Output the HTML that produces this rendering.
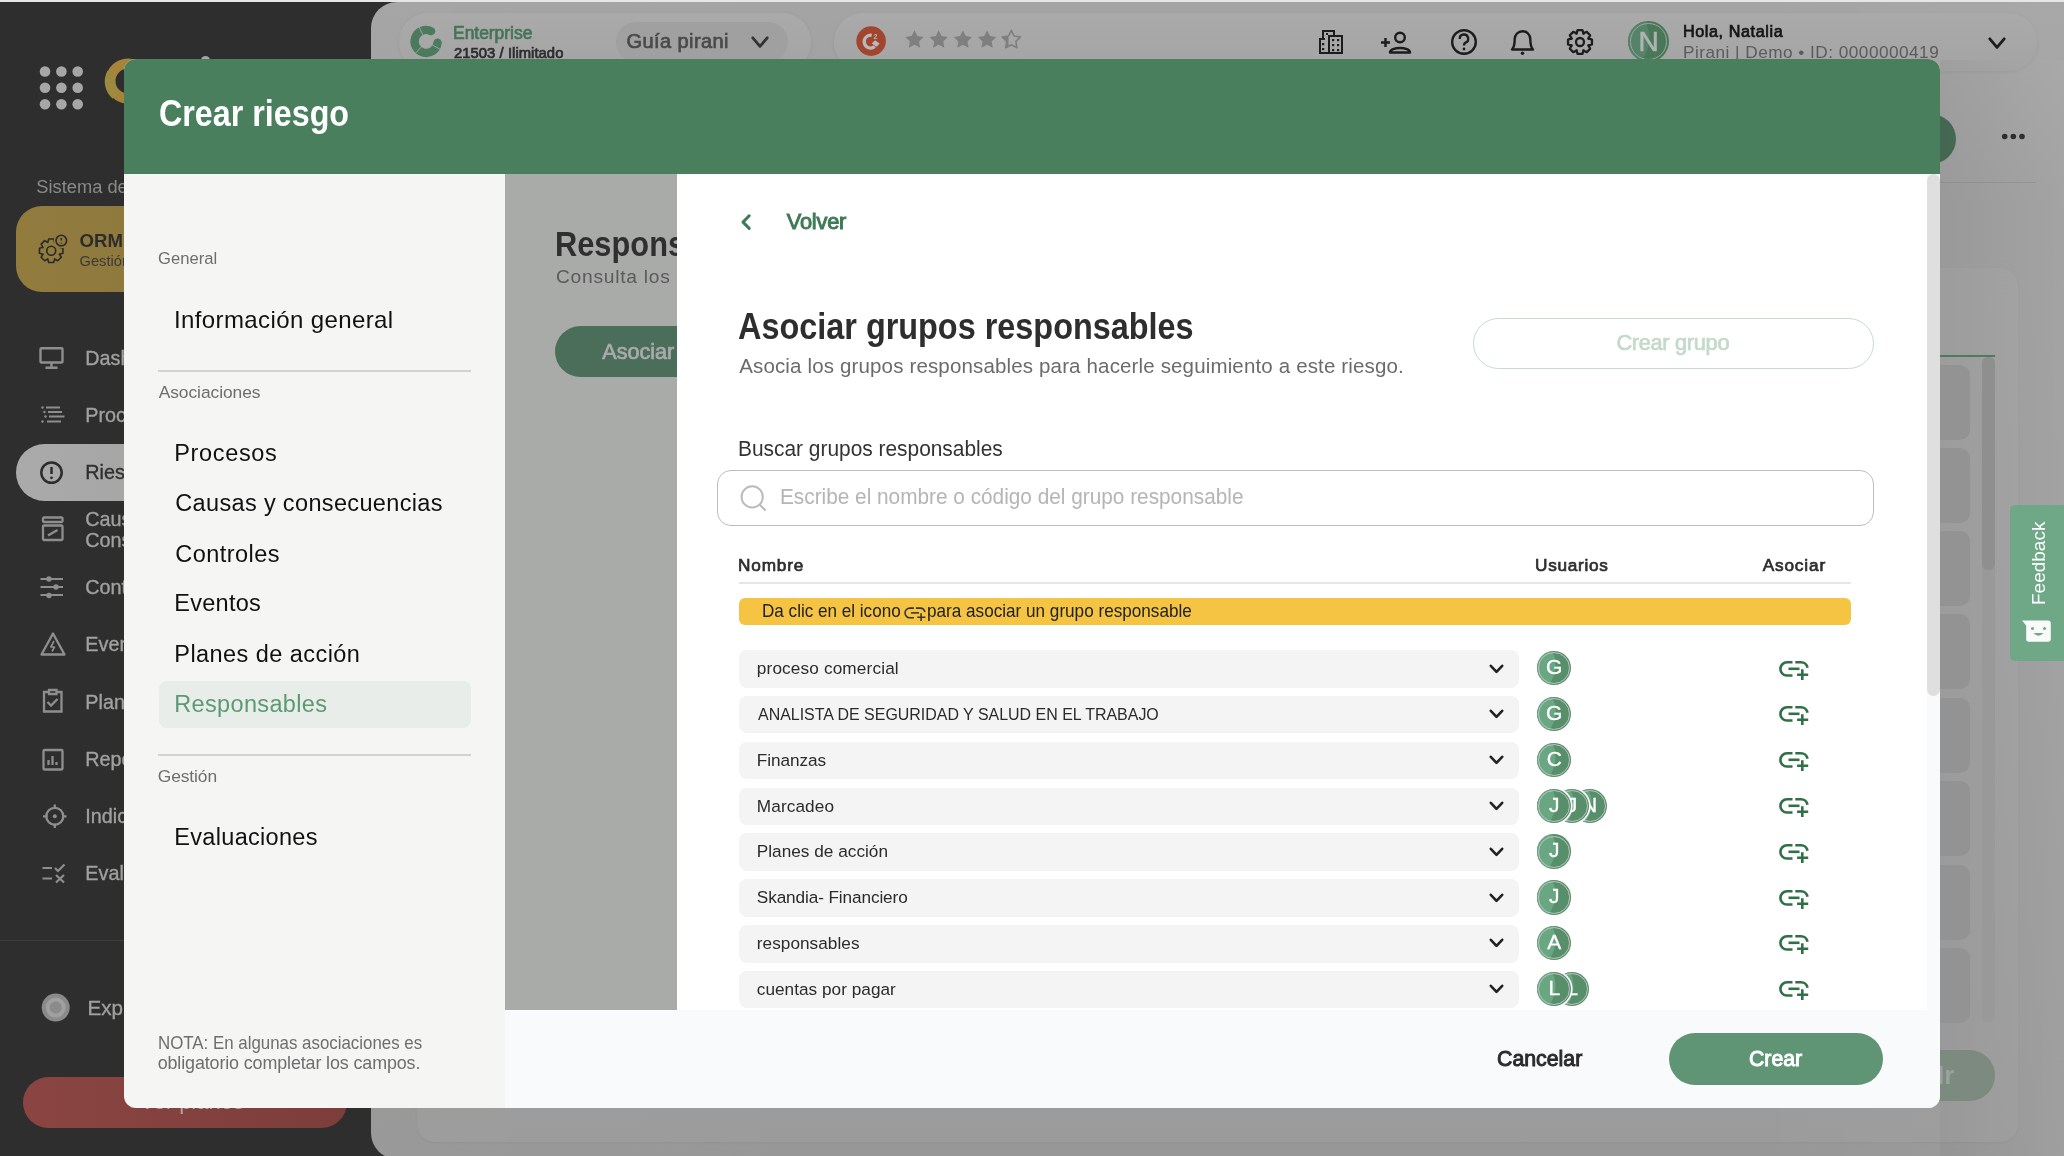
<!DOCTYPE html>
<html><head><meta charset="utf-8"><style>
*{margin:0;padding:0;box-sizing:border-box}
html,body{width:2064px;height:1156px;overflow:hidden}
body{position:relative;background:#2e2e2e;font-family:"Liberation Sans",sans-serif;-webkit-font-smoothing:antialiased;will-change:transform}
.a{position:absolute}
.t{position:absolute;white-space:nowrap;line-height:1;font-family:"Liberation Sans",sans-serif}
svg{position:absolute;overflow:visible}
</style></head>
<body>
<div class="a" style="left:0;top:0;width:2064px;height:2px;background:#e6e6e6"></div>
<div class="a" style="left:371px;top:2px;width:1720px;height:1157px;border-radius:26px;background:linear-gradient(90deg,rgba(255,255,255,.02) 0%,rgba(255,255,255,0) 30%,rgba(255,255,255,0) 80%,rgba(255,255,255,.05) 100%),linear-gradient(180deg,#a3a4a3 0px,#a1a2a1 60px,#9b9c9b 200px,#9a9b9a 600px,#979797 1156px)"></div>
<div class="a" style="left:399px;top:13px;width:412px;height:58px;border-radius:29px;background:linear-gradient(180deg,#aaaaaa,#a4a4a4);box-shadow:0 1px 4px rgba(0,0,0,.06)"></div>
<div class="a" style="left:616px;top:22px;width:172px;height:40px;border-radius:20px;background:#a0a0a0"></div>
<div class="a" style="left:834px;top:13px;width:1203px;height:58px;border-radius:29px;background:linear-gradient(180deg,#aaaaaa,#a4a4a4);box-shadow:0 1px 4px rgba(0,0,0,.06)"></div>
<svg style="left:405px;top:20px" width="42" height="42" viewBox="0 0 42 42"><path d="M32.54 22.70 A11.5 11.5 0 1 1 26.14 11.16" fill="none" stroke="#4b7a5c" stroke-width="8.3" stroke-linecap="round"/><path d="M18.25 15.66 L13.87 6.67 M16.75 26.33 L10.06 33.76 M26.79 24.65 L35.53 29.50" stroke="#a2a9a4" stroke-width="0.9"/></svg>
<svg style="left:752px;top:37px" width="16" height="10" viewBox="0 0 16 10"><path d="M0.8 0.8 L8.0 9.4 L15.2 0.8" fill="none" stroke="#333" stroke-width="2.8" stroke-linecap="round" stroke-linejoin="round"/></svg>
<svg style="left:856px;top:26px" width="30" height="30" viewBox="0 0 30 30"><circle cx="15.1" cy="15.1" r="14.8" fill="#a2452f"/><path d="M15.71 9.30 A6.4 6.4 0 1 0 18.71 20.50" fill="none" stroke="#b9b9b9" stroke-width="3.2"/><polygon points="15.8,17.3 19.1,14.2 23.6,17.4 20.4,21" fill="#b9b9b9"/><text x="17.6" y="12.6" font-size="7" font-family="Liberation Sans" font-weight="700" fill="#b9b9b9">2</text></svg>
<svg style="left:900px;top:28px" width="130" height="24" viewBox="0 0 130 24"><polygon points="14.50,2.30 17.32,8.02 23.63,8.93 19.07,13.38 20.14,19.67 14.50,16.70 8.86,19.67 9.93,13.38 5.37,8.93 11.68,8.02" fill="#7f7f7f"/><polygon points="38.70,2.30 41.52,8.02 47.83,8.93 43.27,13.38 44.34,19.67 38.70,16.70 33.06,19.67 34.13,13.38 29.57,8.93 35.88,8.02" fill="#7f7f7f"/><polygon points="62.90,2.30 65.72,8.02 72.03,8.93 67.47,13.38 68.54,19.67 62.90,16.70 57.26,19.67 58.33,13.38 53.77,8.93 60.08,8.02" fill="#7f7f7f"/><polygon points="87.10,2.30 89.92,8.02 96.23,8.93 91.67,13.38 92.74,19.67 87.10,16.70 81.46,19.67 82.53,13.38 77.97,8.93 84.28,8.02" fill="#7f7f7f"/><clipPath id="hs"><rect x="101.69999999999996" y="2.299999999999999" width="6.8" height="19.2"/></clipPath><polygon points="111.30,2.30 114.12,8.02 120.43,8.93 115.87,13.38 116.94,19.67 111.30,16.70 105.66,19.67 106.73,13.38 102.17,8.93 108.48,8.02" fill="#7f7f7f" clip-path="url(#hs)"/><polygon points="111.30,2.30 114.12,8.02 120.43,8.93 115.87,13.38 116.94,19.67 111.30,16.70 105.66,19.67 106.73,13.38 102.17,8.93 108.48,8.02" fill="none" stroke="#7f7f7f" stroke-width="1.6" stroke-linejoin="round"/></svg>
<svg style="left:1318px;top:29px" width="26" height="25" viewBox="0 0 26 25" fill="none" stroke="#1c1c1c" stroke-width="2"><path d="M2 24 V10 H7 M5 10 V2 H16 V6 M11 24 V7 H24 V24 M1 24 H25"/><g fill="#1c1c1c" stroke="none"><rect x="14" y="10" width="2.2" height="2.2"/><rect x="19" y="10" width="2.2" height="2.2"/><rect x="14" y="15" width="2.2" height="2.2"/><rect x="19" y="15" width="2.2" height="2.2"/><rect x="14" y="20" width="2.2" height="2.2"/><rect x="19" y="20" width="2.2" height="2.2"/><rect x="4" y="14" width="2.2" height="2.2"/><rect x="4" y="19" width="2.2" height="2.2"/><rect x="8" y="4" width="2" height="2"/></g></svg>
<svg style="left:1380px;top:31px" width="32" height="23" viewBox="0 0 32 23" fill="none" stroke="#1c1c1c" stroke-width="2.4"><path d="M1 11.5 H10 M5.5 7 V16"/><circle cx="20" cy="6.5" r="4.8"/><path d="M10 21.5 C10 15.5 30 15.5 30 21.5 Z" stroke-linejoin="round"/></svg>
<svg style="left:1450px;top:28px" width="28" height="28" viewBox="0 0 28 28" fill="none" stroke="#1c1c1c" stroke-width="2.4"><circle cx="14" cy="14" r="11.8"/><path d="M9.8 11 A4.2 4.2 0 1 1 15.5 14.6 C14.3 15.2 14 16 14 17.6"/><circle cx="14" cy="21" r="1.4" fill="#1c1c1c" stroke="none"/></svg>
<svg style="left:1510px;top:28px" width="25" height="28" viewBox="0 0 25 28" fill="none" stroke="#1c1c1c" stroke-width="2.4"><path d="M2 21.5 H23 C20.5 19 20.3 16 20.3 11 A7.8 7.8 0 0 0 4.7 11 C4.7 16 4.5 19 2 21.5 Z" stroke-linejoin="round"/><circle cx="12.5" cy="25.3" r="1.7" fill="#1c1c1c" stroke="none"/></svg>
<svg style="left:1567px;top:28.5px" width="26" height="26" viewBox="0 0 26 26" fill="none" stroke="#1c1c1c" stroke-width="2.3" stroke-linejoin="round"><polygon points="24.96,10.58 24.96,15.42 21.22,16.67 21.41,16.22 23.17,19.74 19.74,23.17 16.22,21.41 16.67,21.22 15.42,24.96 10.58,24.96 9.33,21.22 9.78,21.41 6.26,23.17 2.83,19.74 4.59,16.22 4.78,16.67 1.04,15.42 1.04,10.58 4.78,9.33 4.59,9.78 2.83,6.26 6.26,2.83 9.78,4.59 9.33,4.78 10.58,1.04 15.42,1.04 16.67,4.78 16.22,4.59 19.74,2.83 23.17,6.26 21.41,9.78 21.22,9.33"/><circle cx="13" cy="13" r="4"/></svg>
<div class="a" style="left:1628px;top:21px;width:41px;height:41px;border-radius:50%;background:#497758;overflow:hidden"><div class="a" style="left:-19px;top:-8px;width:40px;height:56px;border-radius:50%;background:#55836a;transform:rotate(10deg)"></div><div class="a" style="left:2.2px;top:2.2px;right:2.2px;bottom:2.2px;border-radius:50%;border:1.3px solid #9da39f"></div><div class="a" style="left:0;top:0;width:41px;line-height:42.5px;text-align:center;color:#b0b3b1;font-size:28px;-webkit-text-stroke:0.6px #b0b3b1">N</div></div>
<svg style="left:1989px;top:38px" width="16" height="10" viewBox="0 0 16 10"><path d="M0.8 0.8 L8.0 9.4 L15.2 0.8" fill="none" stroke="#1c1c1c" stroke-width="2.8" stroke-linecap="round" stroke-linejoin="round"/></svg>
<div class="a" style="left:1906px;top:114px;width:50px;height:50px;border-radius:50%;background:#466b55"></div>
<svg style="left:2000px;top:133px" width="28" height="8" viewBox="0 0 28 8" fill="#2a2a2a"><circle cx="4.7" cy="3.5" r="2.8"/><circle cx="13.3" cy="3.5" r="2.8"/><circle cx="22" cy="3.5" r="2.8"/></svg>
<div class="a" style="left:1900px;top:182px;width:136px;height:1px;background:#939393"></div>
<div class="a" style="left:1940px;top:60px;width:124px;height:1096px;background:linear-gradient(90deg,rgba(0,0,0,.035),rgba(255,255,255,.03))"></div>
<div class="a" style="left:417px;top:268px;width:1601px;height:874px;border-radius:18px;background:rgba(255,255,255,.04);box-shadow:0 1px 3px rgba(0,0,0,.04)"></div>
<div class="a" style="left:1900px;top:355px;width:95px;height:2px;background:#4f7a5e"></div>
<div class="a" style="left:1900px;top:365px;width:70px;height:75px;border-radius:10px;background:#939393"></div>
<div class="a" style="left:1900px;top:448px;width:70px;height:75px;border-radius:10px;background:#939393"></div>
<div class="a" style="left:1900px;top:531px;width:70px;height:75px;border-radius:10px;background:#939393"></div>
<div class="a" style="left:1900px;top:614px;width:70px;height:75px;border-radius:10px;background:#939393"></div>
<div class="a" style="left:1900px;top:698px;width:70px;height:75px;border-radius:10px;background:#939393"></div>
<div class="a" style="left:1900px;top:781px;width:70px;height:75px;border-radius:10px;background:#939393"></div>
<div class="a" style="left:1900px;top:865px;width:70px;height:75px;border-radius:10px;background:#939393"></div>
<div class="a" style="left:1900px;top:948px;width:70px;height:75px;border-radius:10px;background:#939393"></div>
<div class="a" style="left:1982px;top:357px;width:13px;height:665px;border-radius:6px;background:#999999"></div>
<div class="a" style="left:1982px;top:357px;width:13px;height:213px;border-radius:6px;background:#8f8f8f"></div>
<div class="a" style="left:1880px;top:1050px;width:115px;height:51px;border-radius:26px;background:#7c8a80"></div>
<div class="t" style="left:1937px;top:1062px;font-size:26px;font-weight:700;color:#9aa19c">Ir</div>
<svg style="left:0;top:0" width="100" height="120" fill="#a6a6a6"><circle cx="45" cy="71.5" r="5.3"/><circle cx="45" cy="87.8" r="5.3"/><circle cx="45" cy="104.2" r="5.3"/><circle cx="61.4" cy="71.5" r="5.3"/><circle cx="61.4" cy="87.8" r="5.3"/><circle cx="61.4" cy="104.2" r="5.3"/><circle cx="77.7" cy="71.5" r="5.3"/><circle cx="77.7" cy="87.8" r="5.3"/><circle cx="77.7" cy="104.2" r="5.3"/></svg>
<svg style="left:100px;top:55px" width="60" height="56" viewBox="0 0 60 56"><circle cx="28" cy="26" r="17.5" fill="none" stroke="#a8843a" stroke-width="10"/><path d="M12 18 A17.5 17.5 0 0 0 16 40" fill="none" stroke="#9c8a3e" stroke-width="10"/></svg>
<div class="a" style="left:200.5px;top:56px;width:9px;height:9px;border-radius:50%;background:#a6a6a6"></div>
<div class="a" style="left:311px;top:58.5px;width:9px;height:9px;border-radius:50%;background:#a8863c"></div>
<div class="a" style="left:16px;top:206px;width:340px;height:86px;border-radius:26px;background:linear-gradient(90deg,#917b3d,#8b773e)"></div>
<svg style="left:30px;top:225px" width="50" height="45" viewBox="0 0 50 45"><polygon points="18.70,13.96 23.70,13.96 24.67,17.50 24.55,17.45 27.73,15.63 31.27,19.17 29.45,22.35 29.40,22.23 32.94,23.20 32.94,28.20 29.40,29.17 29.45,29.05 31.27,32.23 27.73,35.77 24.55,33.95 24.67,33.90 23.70,37.44 18.70,37.44 17.73,33.90 17.85,33.95 14.67,35.77 11.13,32.23 12.95,29.05 13.00,29.17 9.46,28.20 9.46,23.20 13.00,22.23 12.95,22.35 11.13,19.17 14.67,15.63 17.85,17.45 17.73,17.50" fill="none" stroke="#2a2a2a" stroke-width="1.6" stroke-linejoin="round"/><circle cx="21.2" cy="25.7" r="4.5" fill="none" stroke="#2a2a2a" stroke-width="1.6"/><circle cx="31.3" cy="15.6" r="7.6" fill="#907b3e"/><circle cx="31.3" cy="15.6" r="5.3" fill="none" stroke="#2a2a2a" stroke-width="1.6"/><path d="M31.3 13 V15.6 M31.3 17.4 V18.4" stroke="#2a2a2a" stroke-width="1.5"/></svg>
<div class="a" style="left:16px;top:444px;width:340px;height:57px;border-radius:29px;background:linear-gradient(90deg,#a9aaa9,#9d9e9d)"></div>
<svg style="left:38px;top:346px" width="27" height="24" viewBox="0 0 27 24" fill="none" stroke="#8e8e8e" stroke-width="2.4"><rect x="2.5" y="2.2" width="22" height="14.3" rx="1"/><path d="M13.5 16.5 V21.5 M7.5 21.7 H19.5"/></svg>
<svg style="left:40px;top:405px" width="26" height="20" viewBox="0 0 26 20" fill="none" stroke="#8e8e8e" stroke-width="2.2"><path d="M6 2.5 H20 M8 7 H22 M9 11.5 H24.5 M7 16.5 H21"/><g fill="#8e8e8e" stroke="none"><circle cx="2.5" cy="2.5" r="1.2"/><circle cx="4.5" cy="7" r="1.2"/><circle cx="5.5" cy="11.5" r="1.2"/><circle cx="2.5" cy="16.5" r="1.2"/></g></svg>
<svg style="left:39px;top:459.5px" width="26" height="26" viewBox="0 0 26 26" fill="none" stroke="#2c2c2c" stroke-width="2.5"><circle cx="12.5" cy="12.6" r="10.2"/><path d="M12.5 7 V14"/><circle cx="12.5" cy="17.8" r="1.4" fill="#2c2c2c" stroke="none"/></svg>
<svg style="left:41px;top:516px" width="24" height="26" viewBox="0 0 24 26" fill="none" stroke="#8e8e8e" stroke-width="2.3"><rect x="2" y="1.5" width="19.5" height="4.5" rx="1"/><rect x="2" y="9.5" width="19.5" height="14.5" rx="1"/><path d="M7 19.5 L16.5 14"/></svg>
<svg style="left:39px;top:576px" width="26" height="23" viewBox="0 0 26 23" fill="none" stroke="#8e8e8e" stroke-width="2.2"><path d="M1.5 3 H24 M1.5 11 H24 M1.5 19 H24"/><g fill="#8e8e8e" stroke="none"><circle cx="10" cy="3" r="2.7"/><circle cx="17" cy="11" r="2.7"/><circle cx="10" cy="19.5" r="2.7"/></g></svg>
<svg style="left:39px;top:631px" width="28" height="27" viewBox="0 0 28 27" fill="none" stroke="#8e8e8e" stroke-width="2.3" stroke-linejoin="round"><path d="M14 2.5 L25.5 23.5 H2.5 Z"/><path d="M15 10 L11.8 16 H15.5 L13 20.5" stroke-width="1.6"/></svg>
<svg style="left:41px;top:688px" width="24" height="26" viewBox="0 0 24 26" fill="none" stroke="#8e8e8e" stroke-width="2.3"><path d="M8 4 H3 V23.5 H20.5 V4 H15.5"/><path d="M8 2 H15.5 V6 H8 Z"/><path d="M6.5 14 L10 17.5 L16.5 11"/></svg>
<svg style="left:41px;top:748px" width="24" height="24" viewBox="0 0 24 24" fill="none" stroke="#8e8e8e" stroke-width="2.3"><rect x="2.5" y="2" width="19" height="19.5" rx="1"/><path d="M7.5 17 V12 M11.5 17 V8 M15.5 17 V14"/></svg>
<svg style="left:40.5px;top:802.5px" width="28" height="28" viewBox="0 0 28 28" fill="none" stroke="#8e8e8e" stroke-width="2.3"><circle cx="13.8" cy="13.3" r="8.5"/><path d="M13.8 1.5 V6 M13.8 20.5 V25 M2 13.3 H6.5 M21 13.3 H25.5"/><circle cx="13.8" cy="13.3" r="2" fill="#8e8e8e" stroke="none"/></svg>
<svg style="left:41px;top:863px" width="27" height="21" viewBox="0 0 27 21" fill="none" stroke="#8e8e8e" stroke-width="2.2"><path d="M1.5 5 H11 M1.5 15.5 H11 M14 5 L17 8 L23.5 1.5 M15 12 L23 19.5 M23 12 L15 19.5"/></svg>
<div class="a" style="left:0;top:940px;width:370px;height:1px;background:#3b3b3b"></div>
<svg style="left:40px;top:992px" width="32" height="32" viewBox="0 0 32 32"><circle cx="15.7" cy="15.6" r="14" fill="#8b8b8b"/><circle cx="15.7" cy="15.6" r="8" fill="none" stroke="#a0a0a0" stroke-width="4"/></svg>
<div class="a" style="left:23px;top:1077px;width:324px;height:51px;border-radius:26px;background:linear-gradient(90deg,#8a4542,#7c3d3b)"></div>
<div class="t" style="left:140px;top:1091px;font-size:22px;color:#b9a3a2">Ver planes</div>
<div class="t" style="left:453.0px;top:25.0px;font-size:17.5px;font-weight:400;color:#45745a;letter-spacing:-0.044px;-webkit-text-stroke:0.7px #45745a">Enterprise</div>
<div class="t" style="left:454.0px;top:46.4px;font-size:14.8px;font-weight:400;color:#2d2d2d;letter-spacing:0.050px;-webkit-text-stroke:0.7px #2d2d2d">21503 / Ilimitado</div>
<div class="t" style="left:626.4px;top:30.9px;font-size:20.0px;font-weight:400;color:#4a4a4a;letter-spacing:0.430px;-webkit-text-stroke:0.7px #4a4a4a">Guía pirani</div>
<div class="t" style="left:1682.9px;top:22.8px;font-size:16.2px;font-weight:400;color:#151515;letter-spacing:0.592px;-webkit-text-stroke:0.7px #151515">Hola, Natalia</div>
<div class="t" style="left:1683.0px;top:44.1px;font-size:17.2px;font-weight:400;color:#5b5b5b;letter-spacing:0.483px">Pirani | Demo • ID: 0000000419</div>
<div class="t" style="left:36.3px;top:178.3px;font-size:18.3px;font-weight:400;color:#8a8a8a">Sistema de gestión</div>
<div class="t" style="left:79.5px;top:231.5px;font-size:18.6px;font-weight:700;color:#2c2c2c">ORM</div>
<div class="t" style="left:79.5px;top:254.0px;font-size:14.7px;font-weight:400;color:#3a3a3a">Gestión de riesgos</div>
<div class="t" style="left:85.3px;top:348.8px;font-size:19.8px;font-weight:400;color:#a0a0a0;-webkit-text-stroke:0.35px #a0a0a0">Dashboard</div>
<div class="t" style="left:85.3px;top:405.8px;font-size:19.8px;font-weight:400;color:#a0a0a0;-webkit-text-stroke:0.35px #a0a0a0">Procesos</div>
<div class="t" style="left:85.3px;top:463.1px;font-size:19.8px;font-weight:400;color:#2f2f2f;-webkit-text-stroke:0.35px #2f2f2f">Riesgos</div>
<div class="t" style="left:85.3px;top:509.8px;font-size:19.8px;font-weight:400;color:#a0a0a0;-webkit-text-stroke:0.35px #a0a0a0">Causas y</div>
<div class="t" style="left:85.3px;top:530.7px;font-size:19.8px;font-weight:400;color:#a0a0a0;-webkit-text-stroke:0.35px #a0a0a0">Consecuencias</div>
<div class="t" style="left:85.3px;top:577.8px;font-size:19.8px;font-weight:400;color:#a0a0a0;-webkit-text-stroke:0.35px #a0a0a0">Controles</div>
<div class="t" style="left:85.3px;top:635.2px;font-size:19.8px;font-weight:400;color:#a0a0a0;-webkit-text-stroke:0.35px #a0a0a0">Eventos</div>
<div class="t" style="left:85.3px;top:692.5px;font-size:19.8px;font-weight:400;color:#a0a0a0;-webkit-text-stroke:0.35px #a0a0a0">Planes de acción</div>
<div class="t" style="left:85.3px;top:750.0px;font-size:19.8px;font-weight:400;color:#a0a0a0;-webkit-text-stroke:0.35px #a0a0a0">Reportes</div>
<div class="t" style="left:85.3px;top:806.6px;font-size:19.8px;font-weight:400;color:#a0a0a0;-webkit-text-stroke:0.35px #a0a0a0">Indicadores</div>
<div class="t" style="left:85.3px;top:864.0px;font-size:19.8px;font-weight:400;color:#a0a0a0;-webkit-text-stroke:0.35px #a0a0a0">Evaluaciones</div>
<div class="t" style="left:87.5px;top:997.6px;font-size:20.6px;font-weight:400;color:#a0a0a0;-webkit-text-stroke:0.35px #a0a0a0">Explorar</div>
<div class="a" style="left:124px;top:59px;width:1816px;height:1049px;border-radius:12px;overflow:hidden;background:#f5f5f3">
<div class="a" style="left:0;top:0;width:1816px;height:115px;background:#4a7f5e"></div>
<div class="a" style="left:381px;top:115px;width:172px;height:836px;background:#a9aba9"></div>
<div class="a" style="left:431px;top:267px;width:200px;height:51px;border-radius:26px;background:#4b6e5a"></div>
<div class="a" style="left:553px;top:115px;width:1250px;height:836px;background:#ffffff"></div>
<div class="a" style="left:1803px;top:115px;width:13px;height:836px;background:#f9fafb"></div>
<div class="a" style="left:1803px;top:115px;width:13px;height:522px;border-radius:6.5px;background:#dfdfdf"></div>
<div class="a" style="left:381px;top:951px;width:1435px;height:98px;background:#f9fafb"></div>
</div>
<div class="a" style="left:158px;top:369.5px;width:313px;height:2px;background:#d2d2d2"></div>
<div class="a" style="left:158px;top:753.5px;width:313px;height:2px;background:#d2d2d2"></div>
<div class="a" style="left:158.5px;top:681px;width:312px;height:46.5px;border-radius:8px;background:#e8ede9"></div>
<div class="a" style="left:505px;top:174px;width:172px;height:836px;overflow:hidden">
<div class="a" style="left:-505px;top:-174px;width:2064px;height:1156px">
<div class="t" style="left:555.3px;top:226.0px;font-size:35px;font-weight:700;color:#2f2f2f;transform:scaleX(0.8800);transform-origin:0 0">Responsables</div>
<div class="t" style="left:556.0px;top:267.2px;font-size:19.2px;font-weight:400;color:#5a5a5a;letter-spacing:0.755px">Consulta los grupos responsables asociados</div>
<div class="t" style="left:602.3px;top:340.8px;font-size:21.6px;font-weight:400;color:#a9aaa9;-webkit-text-stroke:0.7px #a9aaa9">Asociar grupos</div>
</div></div>
<svg style="left:740px;top:214px" width="14" height="21" viewBox="0 0 14 21"><path d="M9.2 1.8 L3 8.1 L9.2 14.4" fill="none" stroke="#3d7a56" stroke-width="3" stroke-linecap="round" stroke-linejoin="round"/></svg>
<div class="a" style="left:1473px;top:318px;width:401px;height:51px;border-radius:26px;border:1.5px solid #c6dccd"></div>
<div class="a" style="left:716.5px;top:469.5px;width:1157.5px;height:56.5px;border-radius:14px;border:1.6px solid #bdbdbd"></div>
<svg style="left:738px;top:482px" width="32" height="32" viewBox="0 0 32 32" fill="none" stroke="#bbbbbb" stroke-width="2"><circle cx="14.2" cy="14.9" r="10.6"/><path d="M22 23 L27 28" stroke-linecap="round"/></svg>
<div class="a" style="left:739px;top:582px;width:1112px;height:2px;background:#e6e6e6"></div>
<div class="a" style="left:739px;top:598px;width:1112px;height:27px;border-radius:6px;background:#f5c443"></div>
<svg style="left:903.5px;top:606.5px" width="22" height="15" viewBox="0 0 30 20"><path d="M13.5 1.3 H8 A6.6 6.6 0 0 0 8 14.5 H13.5" fill="none" stroke="#333333" stroke-width="2.1" stroke-linecap="butt"/><path d="M16.3 1.3 H22 A6.6 6.6 0 0 1 28.5 6.8" fill="none" stroke="#333333" stroke-width="2.1"/><path d="M9.5 7.8 H20.5" fill="none" stroke="#333333" stroke-width="2.1"/><path d="M23.3 8.2 V18.9 M18.1 13.7 H29.2" fill="none" stroke="#333333" stroke-width="2.1"/></svg>
<div class="a" style="left:739px;top:650.0px;width:779.5px;height:37.5px;border-radius:8px;background:#f4f4f4"></div>
<svg style="left:1489.8px;top:664.5px" width="13" height="7.5" viewBox="0 0 13 7.5"><path d="M0.8 0.8 L6.5 6.9 L12.2 0.8" fill="none" stroke="#222222" stroke-width="2.6" stroke-linecap="round" stroke-linejoin="round"/></svg>
<div class="a" style="left:1537.1px;top:651.1px;width:34.4px;height:34.4px;border-radius:50%;background:#578f6b;box-shadow:0 0 0 1.6px #fff;overflow:hidden"><div class="a" style="left:-15px;top:-6px;width:33px;height:48px;border-radius:50%;background:#69a782;transform:rotate(14deg)"></div><div class="a" style="left:1.1px;top:1.1px;right:1.1px;bottom:1.1px;border-radius:50%;border:1.4px solid #bfc2c0"></div><div class="a" style="left:0;top:0;width:34.4px;height:34.4px;line-height:32.9px;text-align:center;color:#fff;font-size:21px;-webkit-text-stroke:0.35px #fff;font-family:Liberation Sans">G</div></div>
<svg style="left:1778.5px;top:660.5px" width="30" height="20" viewBox="0 0 30 20"><path d="M13.5 1.3 H8 A6.6 6.6 0 0 0 8 14.5 H13.5" fill="none" stroke="#2f7046" stroke-width="2.6" stroke-linecap="butt"/><path d="M16.3 1.3 H22 A6.6 6.6 0 0 1 28.5 6.8" fill="none" stroke="#2f7046" stroke-width="2.6"/><path d="M9.5 7.8 H20.5" fill="none" stroke="#2f7046" stroke-width="2.6"/><path d="M23.3 8.2 V18.9 M18.1 13.7 H29.2" fill="none" stroke="#2f7046" stroke-width="2.6"/></svg>
<div class="a" style="left:739px;top:695.8px;width:779.5px;height:37.5px;border-radius:8px;background:#f4f4f4"></div>
<svg style="left:1489.8px;top:710.33px" width="13" height="7.5" viewBox="0 0 13 7.5"><path d="M0.8 0.8 L6.5 6.9 L12.2 0.8" fill="none" stroke="#222222" stroke-width="2.6" stroke-linecap="round" stroke-linejoin="round"/></svg>
<div class="a" style="left:1537.1px;top:696.9300000000001px;width:34.4px;height:34.4px;border-radius:50%;background:#578f6b;box-shadow:0 0 0 1.6px #fff;overflow:hidden"><div class="a" style="left:-15px;top:-6px;width:33px;height:48px;border-radius:50%;background:#69a782;transform:rotate(14deg)"></div><div class="a" style="left:1.1px;top:1.1px;right:1.1px;bottom:1.1px;border-radius:50%;border:1.4px solid #bfc2c0"></div><div class="a" style="left:0;top:0;width:34.4px;height:34.4px;line-height:32.9px;text-align:center;color:#fff;font-size:21px;-webkit-text-stroke:0.35px #fff;font-family:Liberation Sans">G</div></div>
<svg style="left:1778.5px;top:706.33px" width="30" height="20" viewBox="0 0 30 20"><path d="M13.5 1.3 H8 A6.6 6.6 0 0 0 8 14.5 H13.5" fill="none" stroke="#2f7046" stroke-width="2.6" stroke-linecap="butt"/><path d="M16.3 1.3 H22 A6.6 6.6 0 0 1 28.5 6.8" fill="none" stroke="#2f7046" stroke-width="2.6"/><path d="M9.5 7.8 H20.5" fill="none" stroke="#2f7046" stroke-width="2.6"/><path d="M23.3 8.2 V18.9 M18.1 13.7 H29.2" fill="none" stroke="#2f7046" stroke-width="2.6"/></svg>
<div class="a" style="left:739px;top:741.7px;width:779.5px;height:37.5px;border-radius:8px;background:#f4f4f4"></div>
<svg style="left:1489.8px;top:756.16px" width="13" height="7.5" viewBox="0 0 13 7.5"><path d="M0.8 0.8 L6.5 6.9 L12.2 0.8" fill="none" stroke="#222222" stroke-width="2.6" stroke-linecap="round" stroke-linejoin="round"/></svg>
<div class="a" style="left:1537.1px;top:742.76px;width:34.4px;height:34.4px;border-radius:50%;background:#578f6b;box-shadow:0 0 0 1.6px #fff;overflow:hidden"><div class="a" style="left:-15px;top:-6px;width:33px;height:48px;border-radius:50%;background:#69a782;transform:rotate(14deg)"></div><div class="a" style="left:1.1px;top:1.1px;right:1.1px;bottom:1.1px;border-radius:50%;border:1.4px solid #bfc2c0"></div><div class="a" style="left:0;top:0;width:34.4px;height:34.4px;line-height:32.9px;text-align:center;color:#fff;font-size:21px;-webkit-text-stroke:0.35px #fff;font-family:Liberation Sans">C</div></div>
<svg style="left:1778.5px;top:752.16px" width="30" height="20" viewBox="0 0 30 20"><path d="M13.5 1.3 H8 A6.6 6.6 0 0 0 8 14.5 H13.5" fill="none" stroke="#2f7046" stroke-width="2.6" stroke-linecap="butt"/><path d="M16.3 1.3 H22 A6.6 6.6 0 0 1 28.5 6.8" fill="none" stroke="#2f7046" stroke-width="2.6"/><path d="M9.5 7.8 H20.5" fill="none" stroke="#2f7046" stroke-width="2.6"/><path d="M23.3 8.2 V18.9 M18.1 13.7 H29.2" fill="none" stroke="#2f7046" stroke-width="2.6"/></svg>
<div class="a" style="left:739px;top:787.5px;width:779.5px;height:37.5px;border-radius:8px;background:#f4f4f4"></div>
<svg style="left:1489.8px;top:801.99px" width="13" height="7.5" viewBox="0 0 13 7.5"><path d="M0.8 0.8 L6.5 6.9 L12.2 0.8" fill="none" stroke="#222222" stroke-width="2.6" stroke-linecap="round" stroke-linejoin="round"/></svg>
<div class="a" style="left:1572.5px;top:788.59px;width:34.4px;height:34.4px;border-radius:50%;background:#578f6b;box-shadow:0 0 0 1.6px #fff;overflow:hidden"><div class="a" style="left:-15px;top:-6px;width:33px;height:48px;border-radius:50%;background:#69a782;transform:rotate(14deg)"></div><div class="a" style="left:1.1px;top:1.1px;right:1.1px;bottom:1.1px;border-radius:50%;border:1.4px solid #bfc2c0"></div><div class="a" style="left:0;top:0;width:34.4px;height:34.4px;line-height:32.9px;text-align:center;color:#fff;font-size:21px;-webkit-text-stroke:0.35px #fff;font-family:Liberation Sans">N</div></div>
<div class="a" style="left:1554.8px;top:788.59px;width:34.4px;height:34.4px;border-radius:50%;background:#578f6b;box-shadow:0 0 0 1.6px #fff;overflow:hidden"><div class="a" style="left:-15px;top:-6px;width:33px;height:48px;border-radius:50%;background:#69a782;transform:rotate(14deg)"></div><div class="a" style="left:1.1px;top:1.1px;right:1.1px;bottom:1.1px;border-radius:50%;border:1.4px solid #bfc2c0"></div><div class="a" style="left:0;top:0;width:34.4px;height:34.4px;line-height:32.9px;text-align:center;color:#fff;font-size:21px;-webkit-text-stroke:0.35px #fff;font-family:Liberation Sans">J</div></div>
<div class="a" style="left:1537.1px;top:788.59px;width:34.4px;height:34.4px;border-radius:50%;background:#578f6b;box-shadow:0 0 0 1.6px #fff;overflow:hidden"><div class="a" style="left:-15px;top:-6px;width:33px;height:48px;border-radius:50%;background:#69a782;transform:rotate(14deg)"></div><div class="a" style="left:1.1px;top:1.1px;right:1.1px;bottom:1.1px;border-radius:50%;border:1.4px solid #bfc2c0"></div><div class="a" style="left:0;top:0;width:34.4px;height:34.4px;line-height:32.9px;text-align:center;color:#fff;font-size:21px;-webkit-text-stroke:0.35px #fff;font-family:Liberation Sans">J</div></div>
<svg style="left:1778.5px;top:797.99px" width="30" height="20" viewBox="0 0 30 20"><path d="M13.5 1.3 H8 A6.6 6.6 0 0 0 8 14.5 H13.5" fill="none" stroke="#2f7046" stroke-width="2.6" stroke-linecap="butt"/><path d="M16.3 1.3 H22 A6.6 6.6 0 0 1 28.5 6.8" fill="none" stroke="#2f7046" stroke-width="2.6"/><path d="M9.5 7.8 H20.5" fill="none" stroke="#2f7046" stroke-width="2.6"/><path d="M23.3 8.2 V18.9 M18.1 13.7 H29.2" fill="none" stroke="#2f7046" stroke-width="2.6"/></svg>
<div class="a" style="left:739px;top:833.3px;width:779.5px;height:37.5px;border-radius:8px;background:#f4f4f4"></div>
<svg style="left:1489.8px;top:847.8199999999999px" width="13" height="7.5" viewBox="0 0 13 7.5"><path d="M0.8 0.8 L6.5 6.9 L12.2 0.8" fill="none" stroke="#222222" stroke-width="2.6" stroke-linecap="round" stroke-linejoin="round"/></svg>
<div class="a" style="left:1537.1px;top:834.42px;width:34.4px;height:34.4px;border-radius:50%;background:#578f6b;box-shadow:0 0 0 1.6px #fff;overflow:hidden"><div class="a" style="left:-15px;top:-6px;width:33px;height:48px;border-radius:50%;background:#69a782;transform:rotate(14deg)"></div><div class="a" style="left:1.1px;top:1.1px;right:1.1px;bottom:1.1px;border-radius:50%;border:1.4px solid #bfc2c0"></div><div class="a" style="left:0;top:0;width:34.4px;height:34.4px;line-height:32.9px;text-align:center;color:#fff;font-size:21px;-webkit-text-stroke:0.35px #fff;font-family:Liberation Sans">J</div></div>
<svg style="left:1778.5px;top:843.8199999999999px" width="30" height="20" viewBox="0 0 30 20"><path d="M13.5 1.3 H8 A6.6 6.6 0 0 0 8 14.5 H13.5" fill="none" stroke="#2f7046" stroke-width="2.6" stroke-linecap="butt"/><path d="M16.3 1.3 H22 A6.6 6.6 0 0 1 28.5 6.8" fill="none" stroke="#2f7046" stroke-width="2.6"/><path d="M9.5 7.8 H20.5" fill="none" stroke="#2f7046" stroke-width="2.6"/><path d="M23.3 8.2 V18.9 M18.1 13.7 H29.2" fill="none" stroke="#2f7046" stroke-width="2.6"/></svg>
<div class="a" style="left:739px;top:879.1px;width:779.5px;height:37.5px;border-radius:8px;background:#f4f4f4"></div>
<svg style="left:1489.8px;top:893.65px" width="13" height="7.5" viewBox="0 0 13 7.5"><path d="M0.8 0.8 L6.5 6.9 L12.2 0.8" fill="none" stroke="#222222" stroke-width="2.6" stroke-linecap="round" stroke-linejoin="round"/></svg>
<div class="a" style="left:1537.1px;top:880.25px;width:34.4px;height:34.4px;border-radius:50%;background:#578f6b;box-shadow:0 0 0 1.6px #fff;overflow:hidden"><div class="a" style="left:-15px;top:-6px;width:33px;height:48px;border-radius:50%;background:#69a782;transform:rotate(14deg)"></div><div class="a" style="left:1.1px;top:1.1px;right:1.1px;bottom:1.1px;border-radius:50%;border:1.4px solid #bfc2c0"></div><div class="a" style="left:0;top:0;width:34.4px;height:34.4px;line-height:32.9px;text-align:center;color:#fff;font-size:21px;-webkit-text-stroke:0.35px #fff;font-family:Liberation Sans">J</div></div>
<svg style="left:1778.5px;top:889.65px" width="30" height="20" viewBox="0 0 30 20"><path d="M13.5 1.3 H8 A6.6 6.6 0 0 0 8 14.5 H13.5" fill="none" stroke="#2f7046" stroke-width="2.6" stroke-linecap="butt"/><path d="M16.3 1.3 H22 A6.6 6.6 0 0 1 28.5 6.8" fill="none" stroke="#2f7046" stroke-width="2.6"/><path d="M9.5 7.8 H20.5" fill="none" stroke="#2f7046" stroke-width="2.6"/><path d="M23.3 8.2 V18.9 M18.1 13.7 H29.2" fill="none" stroke="#2f7046" stroke-width="2.6"/></svg>
<div class="a" style="left:739px;top:925.0px;width:779.5px;height:37.5px;border-radius:8px;background:#f4f4f4"></div>
<svg style="left:1489.8px;top:939.48px" width="13" height="7.5" viewBox="0 0 13 7.5"><path d="M0.8 0.8 L6.5 6.9 L12.2 0.8" fill="none" stroke="#222222" stroke-width="2.6" stroke-linecap="round" stroke-linejoin="round"/></svg>
<div class="a" style="left:1537.1px;top:926.08px;width:34.4px;height:34.4px;border-radius:50%;background:#578f6b;box-shadow:0 0 0 1.6px #fff;overflow:hidden"><div class="a" style="left:-15px;top:-6px;width:33px;height:48px;border-radius:50%;background:#69a782;transform:rotate(14deg)"></div><div class="a" style="left:1.1px;top:1.1px;right:1.1px;bottom:1.1px;border-radius:50%;border:1.4px solid #bfc2c0"></div><div class="a" style="left:0;top:0;width:34.4px;height:34.4px;line-height:32.9px;text-align:center;color:#fff;font-size:21px;-webkit-text-stroke:0.35px #fff;font-family:Liberation Sans">A</div></div>
<svg style="left:1778.5px;top:935.48px" width="30" height="20" viewBox="0 0 30 20"><path d="M13.5 1.3 H8 A6.6 6.6 0 0 0 8 14.5 H13.5" fill="none" stroke="#2f7046" stroke-width="2.6" stroke-linecap="butt"/><path d="M16.3 1.3 H22 A6.6 6.6 0 0 1 28.5 6.8" fill="none" stroke="#2f7046" stroke-width="2.6"/><path d="M9.5 7.8 H20.5" fill="none" stroke="#2f7046" stroke-width="2.6"/><path d="M23.3 8.2 V18.9 M18.1 13.7 H29.2" fill="none" stroke="#2f7046" stroke-width="2.6"/></svg>
<div class="a" style="left:739px;top:970.8px;width:779.5px;height:37.5px;border-radius:8px;background:#f4f4f4"></div>
<svg style="left:1489.8px;top:985.31px" width="13" height="7.5" viewBox="0 0 13 7.5"><path d="M0.8 0.8 L6.5 6.9 L12.2 0.8" fill="none" stroke="#222222" stroke-width="2.6" stroke-linecap="round" stroke-linejoin="round"/></svg>
<div class="a" style="left:1554.8px;top:971.91px;width:34.4px;height:34.4px;border-radius:50%;background:#578f6b;box-shadow:0 0 0 1.6px #fff;overflow:hidden"><div class="a" style="left:-15px;top:-6px;width:33px;height:48px;border-radius:50%;background:#69a782;transform:rotate(14deg)"></div><div class="a" style="left:1.1px;top:1.1px;right:1.1px;bottom:1.1px;border-radius:50%;border:1.4px solid #bfc2c0"></div><div class="a" style="left:0;top:0;width:34.4px;height:34.4px;line-height:32.9px;text-align:center;color:#fff;font-size:21px;-webkit-text-stroke:0.35px #fff;font-family:Liberation Sans">L</div></div>
<div class="a" style="left:1537.1px;top:971.91px;width:34.4px;height:34.4px;border-radius:50%;background:#578f6b;box-shadow:0 0 0 1.6px #fff;overflow:hidden"><div class="a" style="left:-15px;top:-6px;width:33px;height:48px;border-radius:50%;background:#69a782;transform:rotate(14deg)"></div><div class="a" style="left:1.1px;top:1.1px;right:1.1px;bottom:1.1px;border-radius:50%;border:1.4px solid #bfc2c0"></div><div class="a" style="left:0;top:0;width:34.4px;height:34.4px;line-height:32.9px;text-align:center;color:#fff;font-size:21px;-webkit-text-stroke:0.35px #fff;font-family:Liberation Sans">L</div></div>
<svg style="left:1778.5px;top:981.31px" width="30" height="20" viewBox="0 0 30 20"><path d="M13.5 1.3 H8 A6.6 6.6 0 0 0 8 14.5 H13.5" fill="none" stroke="#2f7046" stroke-width="2.6" stroke-linecap="butt"/><path d="M16.3 1.3 H22 A6.6 6.6 0 0 1 28.5 6.8" fill="none" stroke="#2f7046" stroke-width="2.6"/><path d="M9.5 7.8 H20.5" fill="none" stroke="#2f7046" stroke-width="2.6"/><path d="M23.3 8.2 V18.9 M18.1 13.7 H29.2" fill="none" stroke="#2f7046" stroke-width="2.6"/></svg>
<div class="a" style="left:1669px;top:1033px;width:214px;height:52px;border-radius:26px;background:#5f9574"></div>
<div class="t" style="left:158.8px;top:94.7px;font-size:37px;font-weight:700;color:#ffffff;transform:scaleX(0.8718);transform-origin:0 0">Crear riesgo</div>
<div class="t" style="left:157.7px;top:250.4px;font-size:17.4px;font-weight:400;color:#6e6e6e;transform:scaleX(0.9550);transform-origin:0 0">General</div>
<div class="t" style="left:174.0px;top:308.0px;font-size:24px;font-weight:400;color:#111111;letter-spacing:0.389px">Información general</div>
<div class="t" style="left:158.7px;top:383.7px;font-size:17.4px;font-weight:400;color:#6e6e6e;letter-spacing:-0.064px">Asociaciones</div>
<div class="t" style="left:174.3px;top:442.2px;font-size:23.5px;font-weight:400;color:#111111;letter-spacing:0.643px">Procesos</div>
<div class="t" style="left:175.3px;top:491.8px;font-size:23.5px;font-weight:400;color:#111111;letter-spacing:0.343px">Causas y consecuencias</div>
<div class="t" style="left:175.3px;top:542.5px;font-size:23.5px;font-weight:400;color:#111111;letter-spacing:0.450px">Controles</div>
<div class="t" style="left:174.3px;top:592.2px;font-size:23.5px;font-weight:400;color:#111111;letter-spacing:0.267px">Eventos</div>
<div class="t" style="left:174.3px;top:642.8px;font-size:23.5px;font-weight:400;color:#111111;letter-spacing:0.440px">Planes de acción</div>
<div class="t" style="left:174.3px;top:692.6px;font-size:23.5px;font-weight:400;color:#5b9a72;letter-spacing:0.336px">Responsables</div>
<div class="t" style="left:157.7px;top:768.2px;font-size:17.4px;font-weight:400;color:#6e6e6e;letter-spacing:-0.083px">Gestión</div>
<div class="t" style="left:174.3px;top:825.8px;font-size:23.5px;font-weight:400;color:#111111;letter-spacing:0.309px">Evaluaciones</div>
<div class="t" style="left:157.8px;top:1035.0px;font-size:17.9px;font-weight:400;color:#6e6e6e;transform:scaleX(0.9430);transform-origin:0 0">NOTA: En algunas asociaciones es</div>
<div class="t" style="left:157.7px;top:1054.7px;font-size:17.9px;font-weight:400;color:#6e6e6e;letter-spacing:-0.119px">obligatorio completar los campos.</div>
<div class="t" style="left:786.8px;top:210.8px;font-size:21.8px;font-weight:400;color:#3f7b57;letter-spacing:-0.200px;-webkit-text-stroke:1.0px #3f7b57">Volver</div>
<div class="t" style="left:738.3px;top:308.9px;font-size:36.6px;font-weight:700;color:#2e2e2e;transform:scaleX(0.8859);transform-origin:0 0">Asociar grupos responsables</div>
<div class="t" style="left:739.2px;top:356.0px;font-size:20.5px;font-weight:400;color:#6b6b6b;letter-spacing:0.152px">Asocia los grupos responsables para hacerle seguimiento a este riesgo.</div>
<div class="t" style="left:1616.4px;top:332.0px;font-size:21.8px;font-weight:400;color:#c3d9cb;letter-spacing:-0.320px;-webkit-text-stroke:0.7px #c3d9cb">Crear grupo</div>
<div class="t" style="left:738.3px;top:437.5px;font-size:21.7px;font-weight:400;color:#333333;transform:scaleX(0.9632);transform-origin:0 0">Buscar grupos responsables</div>
<div class="t" style="left:780.4px;top:486.3px;font-size:21.8px;font-weight:400;color:#b5b5b5;transform:scaleX(0.9538);transform-origin:0 0">Escribe el nombre o código del grupo responsable</div>
<div class="t" style="left:738.0px;top:557.2px;font-size:17.2px;font-weight:400;color:#2e2e2e;letter-spacing:0.840px;-webkit-text-stroke:0.7px #2e2e2e">Nombre</div>
<div class="t" style="left:1535.0px;top:557.4px;font-size:17.2px;font-weight:400;color:#2e2e2e;letter-spacing:0.714px;-webkit-text-stroke:0.7px #2e2e2e">Usuarios</div>
<div class="t" style="left:1762.7px;top:556.8px;font-size:17.2px;font-weight:400;color:#2e2e2e;letter-spacing:0.850px;-webkit-text-stroke:0.7px #2e2e2e">Asociar</div>
<div class="t" style="left:761.7px;top:601.4px;font-size:19px;font-weight:400;color:#222222;transform:scaleX(0.8993);transform-origin:0 0">Da clic en el icono</div>
<div class="t" style="left:927.0px;top:601.4px;font-size:19px;font-weight:400;color:#222222;transform:scaleX(0.9017);transform-origin:0 0">para asociar un grupo responsable</div>
<div class="t" style="left:756.8px;top:660.1px;font-size:17.2px;font-weight:400;color:#2b2b2b;letter-spacing:0.150px">proceso comercial</div>
<div class="t" style="left:757.8px;top:705.9px;font-size:17.2px;font-weight:400;color:#2b2b2b;transform:scaleX(0.9283);transform-origin:0 0">ANALISTA DE SEGURIDAD Y SALUD EN EL TRABAJO</div>
<div class="t" style="left:756.8px;top:751.8px;font-size:17.2px;font-weight:400;color:#2b2b2b;letter-spacing:-0.057px">Finanzas</div>
<div class="t" style="left:756.8px;top:797.6px;font-size:17.2px;font-weight:400;color:#2b2b2b;letter-spacing:0.114px">Marcadeo</div>
<div class="t" style="left:756.8px;top:843.4px;font-size:17.2px;font-weight:400;color:#2b2b2b;letter-spacing:0.020px">Planes de acción</div>
<div class="t" style="left:756.8px;top:889.2px;font-size:17.2px;font-weight:400;color:#2b2b2b;letter-spacing:-0.106px">Skandia- Financiero</div>
<div class="t" style="left:756.8px;top:935.1px;font-size:17.2px;font-weight:400;color:#2b2b2b;letter-spacing:0.045px">responsables</div>
<div class="t" style="left:756.8px;top:980.9px;font-size:17.2px;font-weight:400;color:#2b2b2b;letter-spacing:0.031px">cuentas por pagar</div>
<div class="t" style="left:1496.5px;top:1048.1px;font-size:22.0px;font-weight:400;color:#2b2b2b;-webkit-text-stroke:1.0px #2b2b2b;transform:scaleX(0.9690);transform-origin:0 0">Cancelar</div>
<div class="t" style="left:1749.0px;top:1048.1px;font-size:22.0px;font-weight:400;color:#ffffff;-webkit-text-stroke:1.0px #ffffff;transform:scaleX(0.9667);transform-origin:0 0">Crear</div>
<div class="a" style="left:2010px;top:505px;width:60px;height:156px;border-radius:5px;background:#6ea887"></div>
<div class="t" style="left:2029px;top:605px;font-size:19px;color:#fff;transform:rotate(-90deg);transform-origin:0 0">Feedback</div>
<svg style="left:2020px;top:618px" width="34" height="26" viewBox="0 0 34 26"><path d="M2 2.6 H28 A2.8 2.8 0 0 1 30.8 5.4 V21 A2.8 2.8 0 0 1 28 23.8 H9 A2.8 2.8 0 0 1 6.2 21 V7.5 Z" fill="#fafafa"/><circle cx="12.5" cy="10.6" r="1.5" fill="#6ea887"/><circle cx="24.5" cy="10.6" r="1.5" fill="#6ea887"/><path d="M13.5 15 Q18.5 20.5 23.5 15 Z" fill="#6ea887"/></svg>
</body></html>
